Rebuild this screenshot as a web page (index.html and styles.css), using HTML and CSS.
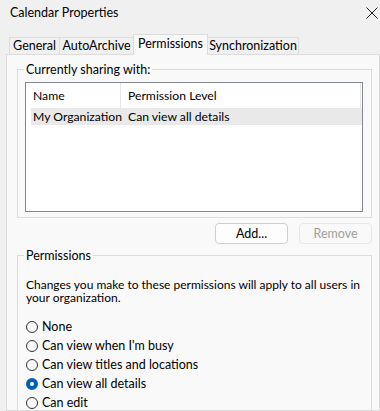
FILE: index.html
```html
<!DOCTYPE html>
<html lang="en">
<head>
    <meta charset="UTF-8">
    <meta name="viewport" content="width=device-width, initial-scale=1.0">
    <title>Calendar Properties</title>
    <link rel="stylesheet" href="styles.css">
</head>
<body>
    <div class="titlebar">
        <span class="title">Calendar Properties</span>
        <svg class="close" width="12" height="12" viewBox="0 0 12 12">
            <path d="M0.5 0.5 L11.5 11.5 M11.5 0.5 L0.5 11.5" stroke="#1a1a1a" stroke-width="1" fill="none"/>
        </svg>
    </div>

    <div class="tabs">
        <div class="tab-lead"></div>
        <div class="tab tab-general">General</div>
        <div class="tab tab-archive">AutoArchive</div>
        <div class="tab tab-perms selected">Permissions</div>
        <div class="tab tab-sync">Synchronization</div>
        <div class="tab-fill"></div>
    </div>

    <div class="panel">
        <fieldset class="group">
            <legend>Currently sharing with:</legend>
            <div class="list">
                <div class="list-head">
                    <div class="cell first">Name</div>
                    <div class="cell">Permission Level</div>
                </div>
                <div class="list-row selected">
                    <div class="cell first">My Organization</div>
                    <div class="cell">Can view all details</div>
                </div>
            </div>
        </fieldset>

        <div class="buttons">
            <button class="btn">Add...</button>
            <button class="btn" disabled>Remove</button>
        </div>

        <fieldset class="group perms">
            <legend>Permissions</legend>
            <p class="note">Changes you make to these permissions will apply to all users in your organization.</p>
            <div class="radio"><span class="dot"></span>None</div>
            <div class="radio"><span class="dot"></span>Can view when I'm busy</div>
            <div class="radio"><span class="dot"></span>Can view titles and locations</div>
            <div class="radio checked"><span class="dot"></span>Can view all details</div>
            <div class="radio"><span class="dot"></span>Can edit</div>
        </fieldset>
    </div>
</body>
</html>
```

FILE: styles.css
```css
* {
    box-sizing: border-box;
}
body {
    margin: 0;
    width: 380px;
    height: 411px;
    overflow: hidden;
    background-color: #f0f0f0;
    font-family: Lato, "Noto Sans", sans-serif;
    font-size: 12px;
    color: #000;
}
.titlebar {
    height: 25px;
    display: flex;
    align-items: center;
    justify-content: space-between;
    padding: 0 2px 0 10px;
    font-size: 12.5px;
}
.close {
    display: block;
}
.tabs {
    height: 30px;
    margin-left: 6px;
    width: 374px;
    display: flex;
    align-items: flex-end;
}
.tab-lead {
    width: 3px;
    border-bottom: 1px solid #dcdcdc;
}
.tab-fill {
    flex: 1;
    border-bottom: 1px solid #dcdcdc;
}
.tab {
    height: 18px;
    line-height: 16px;
    text-align: center;
    font-size: 12.5px;
    border: 1px solid #dcdcdc;
    border-right: none;
    background-color: #f0f0f0;
}
.tab-general { width: 50px; }
.tab-archive { width: 74px; }
.tab-perms { width: 75px; }
.tab-sync {
    width: 91px;
    border-left: none;
    border-right: 1px solid #dcdcdc;
}
.tab.selected {
    height: 21px;
    line-height: 17px;
    border-right: 1px solid #dcdcdc;
    border-bottom: none;
    background-color: #f9f9f9;
}
.panel {
    margin-left: 6px;
    width: 374px;
    height: 356px;
    overflow: hidden;
    border: 1px solid #dcdcdc;
    border-top: none;
    background-color: #f9f9f9;
    padding: 7px 7px 0 10px;
}
.group {
    margin: 0;
    min-width: 0;
    border: 1px solid #dcdcdc;
    padding: 0 8px 5px 6px;
}
.group legend {
    padding: 0 2px;
    line-height: 15px;
    font-size: 12.5px;
}
.list {
    margin: 5px 0 0 1px;
    height: 130px;
    border: 1px solid #828790;
    background-color: #fff;
    padding-left: 5px;
}
.list-head, .list-row {
    display: grid;
    grid-template-columns: 90px 240px;
    font-size: 12.2px;
}
.list-head {
    height: 25px;
    line-height: 25px;
}
.list-head .cell {
    border-right: 1px solid #e5e5e5;
}
.list-row {
    height: 17px;
    line-height: 17px;
}
.list-row.selected {
    background-color: #e9e9e9;
}
.cell {
    padding-left: 7px;
    white-space: nowrap;
}
.cell.first {
    padding-left: 2px;
}
.buttons {
    display: flex;
    justify-content: flex-end;
    gap: 11px;
    margin-top: 5px;
}
.btn {
    width: 73px;
    height: 21px;
    padding: 0;
    font-family: inherit;
    font-size: 12.5px;
    color: #000;
    background-color: #fdfdfd;
    border: 1px solid #cfcfcf;
    border-radius: 4px;
}
.btn:disabled {
    color: #a0a0a0;
    background-color: #f9f9f9;
    border-color: #e6e6e6;
}
.perms {
    margin-top: 4px;
    height: 170px;
}
.note {
    margin: 15px 0 13px 2px;
    line-height: 13px;
}
.radio {
    height: 19px;
    display: flex;
    align-items: center;
    margin-left: 2px;
    font-size: 12.5px;
}
.dot {
    width: 12px;
    height: 12px;
    border: 1px solid #333;
    border-radius: 50%;
    margin-right: 4px;
    background-color: #f9f9f9;
}
.radio.checked .dot {
    border: 4px solid #005fb8;
    background-color: #fff;
}
```
